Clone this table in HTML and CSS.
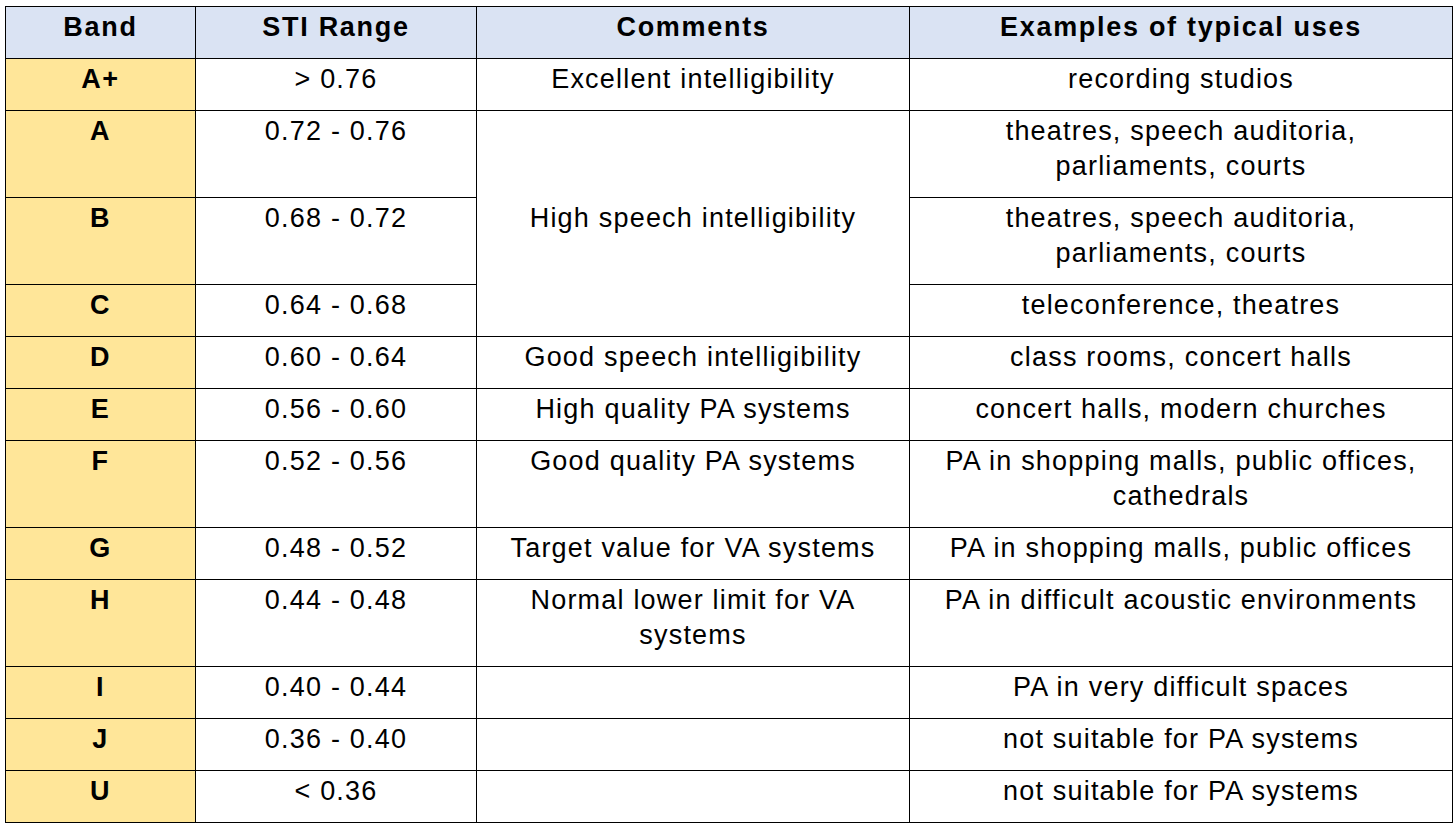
FILE: index.html
```html
<!DOCTYPE html>
<html lang="en">
<head>
<meta charset="utf-8">
<title>STI Bands</title>
<link rel="stylesheet" href="styles.css">
</head>
<body>
<main class="page">
  <table class="sti-table">
    <colgroup>
      <col class="col-band">
      <col class="col-range">
      <col class="col-comments">
      <col class="col-uses">
    </colgroup>
    <thead>
      <tr>
        <th>Band</th>
        <th>STI Range</th>
        <th>Comments</th>
        <th>Examples of typical uses</th>
      </tr>
    </thead>
    <tbody>
      <tr>
        <td class="band">A+</td>
        <td>&gt; 0.76</td>
        <td>Excellent intelligibility</td>
        <td>recording studios</td>
      </tr>
      <tr>
        <td class="band">A</td>
        <td>0.72 - 0.76</td>
        <td class="merged" rowspan="3">High speech intelligibility</td>
        <td>theatres, speech auditoria, parliaments, courts</td>
      </tr>
      <tr>
        <td class="band">B</td>
        <td>0.68 - 0.72</td>
        <td>theatres, speech auditoria, parliaments, courts</td>
      </tr>
      <tr>
        <td class="band">C</td>
        <td>0.64 - 0.68</td>
        <td>teleconference, theatres</td>
      </tr>
      <tr>
        <td class="band">D</td>
        <td>0.60 - 0.64</td>
        <td>Good speech intelligibility</td>
        <td>class rooms, concert halls</td>
      </tr>
      <tr>
        <td class="band">E</td>
        <td>0.56 - 0.60</td>
        <td>High quality PA systems</td>
        <td>concert halls, modern churches</td>
      </tr>
      <tr>
        <td class="band">F</td>
        <td>0.52 - 0.56</td>
        <td>Good quality PA systems</td>
        <td>PA in shopping malls, public offices, cathedrals</td>
      </tr>
      <tr>
        <td class="band">G</td>
        <td>0.48 - 0.52</td>
        <td>Target value for VA systems</td>
        <td>PA in shopping malls, public offices</td>
      </tr>
      <tr>
        <td class="band">H</td>
        <td>0.44 - 0.48</td>
        <td>Normal lower limit for VA systems</td>
        <td>PA in difficult acoustic environments</td>
      </tr>
      <tr>
        <td class="band">I</td>
        <td>0.40 - 0.44</td>
        <td></td>
        <td>PA in very difficult spaces</td>
      </tr>
      <tr>
        <td class="band">J</td>
        <td>0.36 - 0.40</td>
        <td></td>
        <td>not suitable for PA systems</td>
      </tr>
      <tr>
        <td class="band">U</td>
        <td>&lt; 0.36</td>
        <td></td>
        <td>not suitable for PA systems</td>
      </tr>
    </tbody>
  </table>
</main>
</body>
</html>
```
FILE: styles.css
```css
html, body {
  margin: 0;
  padding: 0;
  background: #ffffff;
}

.page {
  padding: 6px 0 0 5px;
}

.sti-table {
  border-collapse: collapse;
  table-layout: fixed;
  width: 1447px;
  font-family: "Liberation Sans", Arial, sans-serif;
  font-size: 27px;
  letter-spacing: 1.2px;
  line-height: 35px;
  color: #000000;
}

.col-band { width: 190px; }
.col-range { width: 281px; }
.col-comments { width: 433px; }
.col-uses { width: 543px; }

.sti-table th,
.sti-table td {
  border: 1px solid #000000;
  padding: 3px 16px 13px;
  text-align: center;
  vertical-align: top;
}

.sti-table th {
  background: #dae3f3;
  font-weight: bold;
  letter-spacing: 1.7px;
}

.sti-table td.band {
  background: #ffe699;
  font-weight: bold;
  letter-spacing: 1.7px;
}

.sti-table td.merged {
  vertical-align: middle;
}
```
